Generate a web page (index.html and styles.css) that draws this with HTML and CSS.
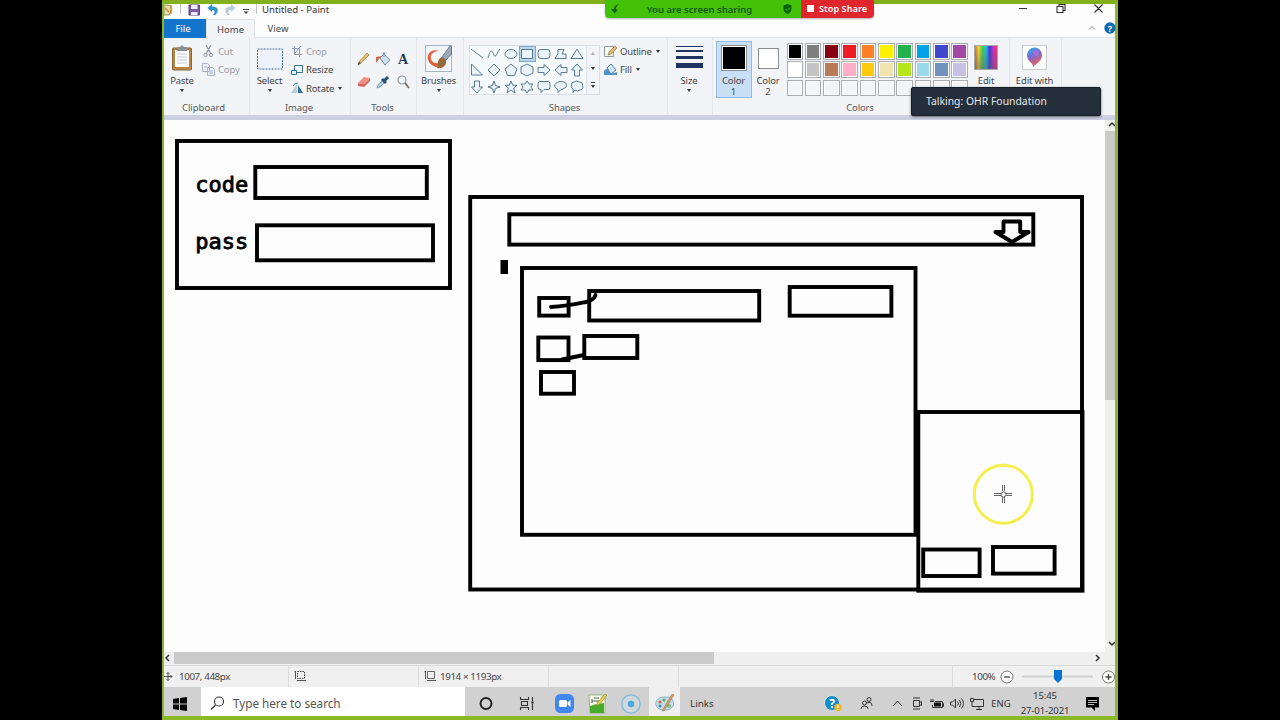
FILE: index.html
```
<!DOCTYPE html>
<html lang="en">
<head>
  <meta charset="UTF-8">
  <meta name="viewport" content="width=device-width, initial-scale=1.0">
  <title>Untitled - Paint</title>
  <link rel="stylesheet" href="styles.css">
</head>
<body>
  <div class="screen">
    <header class="titlebar">
      <svg class="quick" width="94" height="15" viewBox="0 0 94 15">
        <path d="M0 1h5l3 4-3 6H0z" fill="#e3dcae" stroke="#8b9a61"/>
        <path d="M1 4l4 4M7 1v9" stroke="#d58a3a" stroke-width="1.5"/>
        <path d="M16.500 0v10M92.500 0v10" stroke="#c4c4c4"/>
        <path d="M25 1h10.500v10H25z" fill="#7d5ba6" stroke="#60458a"/>
        <path d="M27 1h6.500v4H27zM27 8h6.500v3H27z" fill="#f2eef8"/>
        <path d="M43.500 4L48 0v2.500c6 0 7.500 4 3.500 8.500h-2.500c2.500-3 2-5-1-5V8z" fill="#2f93cf"/>
        <path d="M71.500 4L67 0v2.500c-6 0-7.500 4-3.500 8.500H66c-2.500-3-2-5 1-5V8z" fill="#bccbd6"/>
        <path d="M79 5.500h6" stroke="#444"/><path d="M79.500 7.500h5L82 10z" fill="#444"/>
      </svg>
      <span class="title">Untitled - Paint</span>
      <svg class="window-buttons" width="100" height="15" viewBox="0 0 100 15">
        <path d="M4 4.500h8M42 2.500h6v6h-6zM44 2.500v-2h6v6h-2M79.500 0.500l8 8M87.500 0.500l-8 8" fill="none" stroke="#333" stroke-width="1.100"/>
      </svg>
    </header>

    <nav class="tabs">
      <span class="tab file">File</span>
      <span class="tab active">Home</span>
      <span class="tab">View</span>
      <svg class="help" width="29" height="14" viewBox="0 0 29 14">
        <path d="M2 8.500l3-3 3 3" fill="none" stroke="#888"/>
        <circle cx="23" cy="7" r="5.700" fill="#1269b4"/>
        <text x="23" y="10.500" class="mark">?</text>
      </svg>
    </nav>

    <section class="ribbon">
      <div class="group clipboard">
        <div class="tools-row">
          <div class="big">
            <svg width="22" height="26" viewBox="0 0 22 26">
              <rect x="1.500" y="3" width="19" height="22" rx="1" fill="#b98745" stroke="#8c6736"/>
              <path d="M4 5h14v17H4z" fill="#fff"/>
              <path d="M6 9h10M6 12h10M6 15h10M6 18h10" stroke="#c2ccd8"/>
              <path d="M6 2h3l2-2 2 2h3v4H6z" fill="#8b8f96"/>
            </svg>
            <span>Paste</span><i class="caret"></i>
          </div>
          <div class="list">
            <div class="item off"><svg width="13" height="13" viewBox="0 0 13 13"><path d="M4 0l5 9M9 0L4 9" stroke="#8f98a8" stroke-width="1.300"/><circle cx="3.500" cy="10" r="1.700" fill="none" stroke="#8f98a8"/><circle cx="9" cy="10" r="1.700" fill="none" stroke="#8f98a8"/></svg>Cut</div>
            <div class="item off"><svg width="13" height="13" viewBox="0 0 13 13"><path d="M.5.5h5l2 2v6h-7zM5.500 4.500h5l2 2v6h-7z" fill="#edf1f8" stroke="#a9b4c8"/><path d="M7 8h4M7 10h4M2 4h3" stroke="#a9b4c8"/></svg>Copy</div>
          </div>
        </div>
        <div class="caption">Clipboard</div>
      </div>

      <div class="group image">
        <div class="tools-row">
          <div class="big">
            <svg width="26" height="26" viewBox="0 0 26 26"><rect x=".5" y="4" width="25" height="20" fill="#edf2fa" stroke="#4d7396" stroke-dasharray="2 1"/></svg>
            <span>Select</span><i class="caret"></i>
          </div>
          <div class="list">
            <div class="item off"><svg width="12" height="12" viewBox="0 0 12 12"><path d="M3.500 1v8.500H11M1 3.500h7.500V12M3 9l7-8" fill="none" stroke="#8f9cb0"/></svg>Crop</div>
            <div class="item"><svg width="12" height="12" viewBox="0 0 12 12"><path d="M3.500 1.500h8v7h-8z" fill="#eef6fa" stroke="#3e6f8e"/><path d="M.5 6.500h5v4h-5z" fill="#e3f3fb" stroke="#2c7697"/></svg>Resize</div>
            <div class="item"><svg width="12" height="12" viewBox="0 0 12 12"><path d="M6 2v9H0z" fill="#b9ccdc"/><path d="M7 3l5 8H7z" fill="#2d6c9b"/><path d="M2 4q1-3 5-3" fill="none" stroke="#3d87b5"/></svg>Rotate<i class="caret"></i></div>
          </div>
        </div>
        <div class="caption">Image</div>
      </div>

      <div class="group tools">
        <div class="tool-grid">
          <svg viewBox="0 0 14 14"><path d="M1 13l1-3 8-9 2 2-8 8z" fill="#e9c65d" stroke="#8d743e" stroke-width=".7"/><path d="M1 13l1-3 2 1z" fill="#444"/></svg>
          <svg viewBox="0 0 14 14"><path d="M4 6l4-4 6 6-5 5z" fill="#cfe0ee" stroke="#6e91ad"/><path d="M0 11V5l6-1-3 3z" fill="#c9674d"/><path d="M8 5V0" stroke="#6e91ad"/></svg>
          <svg viewBox="0 0 14 14"><text x="7" y="12" class="letter">A</text></svg>
          <svg viewBox="0 0 14 14"><path d="M1 8l6-6 6 1-6 6z" fill="#f08f86"/><path d="M1 8l6 1v3l-6-1zM7 9l6-6v3l-6 6z" fill="#d66561"/></svg>
          <svg viewBox="0 0 14 14"><path d="M1 13l1-3 5-5 2 2-5 5z" fill="#a8cce2" stroke="#668ba7" stroke-width=".7"/><path d="M6 4l4 4M8 6l4-4" stroke="#245378" stroke-width="3"/></svg>
          <svg viewBox="0 0 14 14"><circle cx="6" cy="5" r="4" fill="#eef5fb" stroke="#8b929a" stroke-width="1.200"/><path d="M9 8l4 5" stroke="#75716c" stroke-width="2"/></svg>
        </div>
        <div class="caption">Tools</div>
      </div>

      <div class="group brushes">
        <div class="big">
          <svg width="27" height="27" viewBox="0 0 27 27">
            <rect x=".5" y=".5" width="26" height="26" fill="#f3f6fa" stroke="#a4b6c8"/>
            <path d="M14 6C6 3 0 10 4 17c3 5 9 6 14 4l-3-3c-4 1-8 0-9-4-1-5 3-8 8-8z" fill="#e2633a"/>
            <path d="M17 12l8-11 1.500 1v7L21 15z" fill="#9babbc" stroke="#586f89" stroke-width=".8"/>
            <path d="M12 23c2-3-1-8 5-11l4 3c1 6-4 9-9 8z" fill="#96683a"/>
          </svg>
          <span>Brushes</span><i class="caret"></i>
        </div>
      </div>

      <div class="group shapes">
        <div class="tools-row">
          <div class="gallery">
            <div class="shape-grid" id="shapes"></div>
            <div class="gallery-scroll"><i class="caret up"></i><i class="caret"></i><span class="more"><i class="caret"></i></span></div>
          </div>
          <div class="list">
            <div class="item"><svg width="13" height="13" viewBox="0 0 13 13"><path d="M.5 1.500h9v10h-9z" fill="#f7f9ec" stroke="#8b98a2"/><path d="M4 10l1-3 6-6 2 2-6 6z" fill="#e5b969" stroke="#8e774a" stroke-width=".7"/></svg>Outline<i class="caret"></i></div>
            <div class="item"><svg width="13" height="13" viewBox="0 0 13 13"><path d="M3 5l4-4 5 6-5 4z" fill="#d5e8f5" stroke="#557fa2"/><path d="M0 8q3-4 5 0t8 1v3H0z" fill="#4f91c8"/></svg>Fill<i class="caret"></i></div>
          </div>
        </div>
        <div class="caption">Shapes</div>
      </div>

      <div class="group size">
        <div class="big">
          <svg width="27" height="27" viewBox="0 0 27 27"><path d="M0 1h27v1H0zM0 5h27v2H0zM0 11h27v3H0zM0 18h27v5H0z" fill="#1c345f"/></svg>
          <span>Size</span><i class="caret"></i>
        </div>
      </div>

      <div class="group colors">
        <div class="tools-row">
          <div class="big color-pick selected"><b class="chip black"></b><span>Color<br>1</span></div>
          <div class="big color-pick"><b class="chip white"></b><span>Color<br>2</span></div>
          <div class="palette" id="palette"></div>
          <div class="big edit"><b class="rainbow"></b><span>Edit</span></div>
        </div>
        <div class="caption">Colors</div>
      </div>

      <div class="group paint3d">
        <div class="big">
          <svg width="25" height="25" viewBox="0 0 25 25">
            <defs><linearGradient id="drop" x1="0" y1="0" x2=".4" y2="1"><stop offset="0" stop-color="#26b7ed"/><stop offset=".5" stop-color="#7867d2"/><stop offset="1" stop-color="#f4654f"/></linearGradient></defs>
            <rect x=".5" y=".5" width="24" height="24" fill="#fff" stroke="#ccc"/>
            <path d="M11 22c1-4-6-5-6-12a7 7 0 0 1 15 0c0 6-5 8-9 12z" fill="url(#drop)"/>
            <circle cx="14" cy="8" r="3" fill="#a070d8"/>
          </svg>
          <span>Edit with</span>
        </div>
      </div>
    </section>

    <main class="workspace">
      <svg class="canvas" viewBox="164 120 941 532">
        <g class="ink">
          <rect x="177" y="141" width="273" height="147"/>
          <rect x="255.300" y="167" width="171.500" height="31"/>
          <rect x="257" y="225.300" width="176" height="35"/>
          <rect x="470.200" y="197" width="611.800" height="392.500"/>
          <rect x="509.300" y="214.300" width="524" height="30.300"/>
          <path class="scribble" d="M1003.500 232V221.500h16.700V232h8.500L1012 242 995.500 232z"/>
          <rect x="522" y="268" width="393.500" height="266.800"/>
          <rect x="539.200" y="298" width="29.400" height="17.600"/>
          <rect x="589.200" y="291" width="170" height="29.500"/>
          <rect x="789.700" y="287" width="101.700" height="28.700"/>
          <rect x="538.300" y="337.500" width="30.200" height="22.600"/>
          <rect x="584.300" y="336" width="53" height="22"/>
          <rect x="541" y="372" width="33" height="21.700"/>
          <path class="scribble" d="M551 307c16-1 25-3 35-5 5-1 9-4 9.500-7M562 359.500l22-4.500"/>
          <rect x="918.300" y="412" width="164.200" height="178.700"/>
          <rect x="923.200" y="549.500" width="56.400" height="26.500"/>
          <rect x="993" y="547" width="61.600" height="26.600"/>
        </g>
        <rect x="500.500" y="260" width="7.500" height="14"/>
        <text x="195.300" y="191.500" class="typed">code</text>
        <text x="195.300" y="248.500" class="typed">pass</text>
        <circle cx="1003.300" cy="494.300" r="29" class="halo"/>
        <path class="cross" d="M994 493.500h7M994 495.500h7M1006 493.500h6M1006 495.500h6M1002.500 485v6M1004.500 485v6M1002.500 497v6M1004.500 497v6"/>
        <circle cx="1003.500" cy="494.500" r="2.500" class="cross"/>
      </svg>
      <div class="vscroll">
        <svg width="10" height="11" viewBox="0 0 10 11"><path d="M4 6l3-3 3 3" class="chev"/></svg>
        <div class="thumb"></div>
        <svg class="end" width="10" height="12" viewBox="0 0 10 12"><path d="M4 2l3 3 3-3" class="chev"/></svg>
      </div>
    </main>
    <div class="hscroll">
      <svg width="10" height="13" viewBox="0 0 10 13"><path d="M5 3L2 6l3 3" class="chev"/></svg>
      <div class="thumb"></div>
      <svg class="end" width="24" height="13" viewBox="0 0 24 13"><path d="M5 3l3 3-3 3" class="chev"/></svg>
    </div>

    <footer class="statusbar">
      <div class="cell"><svg width="9" height="11" viewBox="0 0 9 11"><path d="M0 5.500h8M4 1.500v8M2.500 3L4 1.500 5.500 3M2.500 8L4 9.500 5.500 8M6.500 4L8 5.500 6.500 7" fill="none" stroke="#444" stroke-width=".9"/></svg><span class="pos">1007, 448px</span></div>
      <div class="cell"><svg width="12" height="11" viewBox="0 0 12 11"><path d="M3.500.5h7v7h-7z" fill="none" stroke="#444" stroke-dasharray="1.500 1"/><path d="M1.500 0v8M3 9.500h9M0 1.500L1.500 0" fill="none" stroke="#444" stroke-width=".9"/></svg></div>
      <div class="cell"><svg width="12" height="11" viewBox="0 0 12 11"><path d="M3.500.5h7v7h-7z" fill="none" stroke="#666"/><path d="M1.500 0v8M3 9.500h9M0 1.500L1.500 0" fill="none" stroke="#444" stroke-width=".9"/></svg><span>1914 × 1193px</span></div>
      <div class="cell"></div>
      <div class="cell wide"></div>
      <div class="zoom">
        <span>100%</span>
        <svg width="120" height="18" viewBox="0 0 120 18">
          <circle cx="12" cy="9" r="6" fill="#fff" stroke="#777"/><path d="M9 9h6" stroke="#444" stroke-width="1.300"/>
          <path d="M27 8.500h71" stroke="#d0d0d0" stroke-width="2"/><path d="M59 2h8v9l-4 4-4-4z" fill="#0873d2"/>
          <circle cx="113.500" cy="9" r="6" fill="#fff" stroke="#777"/><path d="M110.500 9h6M113.500 6v6" stroke="#444" stroke-width="1.300"/>
        </svg>
      </div>
    </footer>

    <div class="taskbar">
      <div class="start"><svg width="14" height="14" viewBox="0 0 14 14"><path d="M0 2l6-1v5.600H0zM7 .9L14 0v6.600H7zM0 7.500h6v5.600l-6-1zM7 7.500h7V14l-7-.9z"/></svg></div>
      <div class="search"><svg width="15" height="15" viewBox="0 0 15 15"><circle cx="9" cy="5.500" r="4.500" fill="none" stroke="#333" stroke-width="1.100"/><path d="M5.500 9L1 13.500" stroke="#333" stroke-width="1.200"/></svg>Type here to search</div>
      <div class="slot w41"><svg width="14" height="14" viewBox="0 0 14 14"><circle cx="7" cy="6.500" r="5.500" fill="none" stroke="#222" stroke-width="1.900"/></svg></div>
      <div class="slot w40"><svg width="15" height="13" viewBox="0 0 15 13"><path d="M1 2.500h9M1 10.500h9M2.500 4.500h6v4h-6zM1.500 0v2M9.500 0v2M1.500 11v2M9.500 11v2M13.500 0v4M13.500 7v6" fill="none" stroke="#333" stroke-width="1.100"/><path d="M12.500 4.500h2v2h-2z"/></svg></div>
      <div class="slot w36"><svg width="19" height="19" viewBox="0 0 19 19"><rect width="19" height="19" rx="5.500" fill="#4087ef"/><rect x="4" y="6" width="8" height="7" rx="1.500" fill="#fff"/><path d="M12.500 8.500L15.500 6v7l-3-2.500z" fill="#fff"/></svg></div>
      <div class="slot w31"><svg width="19" height="20" viewBox="0 0 19 20"><path d="M1 1h14l2 3v15H2z" fill="#f7f9ed" stroke="#85ac67" stroke-width=".8"/><path d="M2 12q6-2 14-3v10H2z" fill="#47ac29"/><path d="M4 5v4M4 7h7M6 4h5" stroke="#59634e"/><path d="M8 12l2-4 7-8 2 1-7 9z" fill="#e3d84a" stroke="#827b28" stroke-width=".6"/></svg></div>
      <div class="slot w36"><svg width="20" height="20" viewBox="0 0 20 20"><circle cx="10" cy="10" r="9.200" fill="#d0d8dd" stroke="#7dbbd9" stroke-width="1.300"/><circle cx="10" cy="10" r="3.300" fill="#4ba9dc"/></svg></div>
      <div class="slot w31 current"><svg width="20" height="19" viewBox="0 0 20 19"><path d="M9 3c-6 0-9 4-8 8s6 6 11 5 8-5 6-9-5-4-9-4z" fill="#c1dcea" stroke="#82a6b8" stroke-width=".8"/><circle cx="5" cy="8" r="1.500" fill="#d3604d"/><circle cx="9" cy="6" r="1.500" fill="#65a64e"/><circle cx="5" cy="12" r="1.500" fill="#5079c3"/><circle cx="14" cy="12" r="2" fill="#7fbd7b"/><path d="M7 17L17 0l2 1L9 17z" fill="#d89a5d" stroke="#9c7048" stroke-width=".5"/></svg></div>
      <span class="links">Links</span>

      <div class="tray">
        <div class="slot w34"><svg width="18" height="17" viewBox="0 0 18 17"><circle cx="8" cy="8" r="7.500" fill="#168ac4" stroke="#cbe5ef"/><text x="8" y="12.500" class="mark large">?</text><circle cx="14" cy="12.500" r="3.700" fill="#eeb52d"/><path d="M14 10v3M14 14v1" stroke="#fff"/></svg></div>
        <div class="slot w33"><svg width="13" height="13" viewBox="0 0 13 13"><circle cx="4.500" cy="6" r="2" class="line"/><circle cx="9" cy="2.500" r="2" class="line"/><path d="M1 12q0-3 3.500-3t3.500 3M7 6q5-2 5 3" class="line"/></svg></div>
        <div class="slot w20 gap"><svg width="11" height="7" viewBox="0 0 11 7"><path d="M1 6l4.500-5L10 6" class="line"/></svg></div>
        <div class="slot w20"><svg width="12" height="13" viewBox="0 0 12 13"><path d="M2.500 3.500h6v6h-6zM8.500 5.500l2-1v4l-2-1M2 1h7M2 12h7" class="line"/></svg></div>
        <div class="slot w20"><svg width="14" height="10" viewBox="0 0 14 10"><path d="M4 3.500h7v4H4z" fill="#111"/><path d="M2.500 6v2.500h10v-6H5M12.500 4.500h1v3h-1M0 2.500h4M1 0v2M3 0v2" class="line"/></svg></div>
        <div class="slot w20"><svg width="15" height="11" viewBox="0 0 15 11"><path d="M.5 4h2l3-3v9l-3-3h-2zM7.500 3.500q1.500 2 0 4M9.500 2q2.500 3.500 0 7M11.500.5q4 5 0 10" class="line"/></svg></div>
        <div class="slot w20"><svg width="14" height="12" viewBox="0 0 14 12"><path d="M4 1.500h9.500v7H4M6 11.500h6M9 8.500v3M.5.500h3v3h-3zM2 4v4.500h2" class="line"/></svg></div>
        <span class="lang">ENG</span>
        <div class="clock">15:45<br>27-01-2021</div>
        <div class="slot w34"><svg width="13" height="14" viewBox="0 0 13 14"><path d="M0 0h13v10.500H9V14l-3.500-3.500H0z"/><path d="M2 3.500h9M2 5.500h9M2 7.500h6" stroke="#d1d1d1" stroke-width=".9"/></svg></div>
      </div>
    </div>

    <div class="sharebar">
      <div class="sharing">
        <svg width="9" height="10" viewBox="0 0 9 10"><path d="M8 0C4 1 3 3 3 5H0l3.500 4.500L7 5.500H5C5 3 6 1.500 8 0z" fill="#07660b"/></svg>
        <span>You are screen sharing</span>
        <svg width="9" height="10" viewBox="0 0 9 10"><path d="M4.500 0l4 1.500V5c0 2.500-2 4-4 5-2-1-4-2.500-4-5V1.500z" fill="#08620b"/><path d="M2.500 5l1.500 1.500L7 3.500" fill="none" stroke="#43c008"/></svg>
      </div>
      <div class="stop"><i></i>Stop Share</div>
    </div>
    <div class="talking">Talking: OHR Foundation</div>
  </div>

  <script>
    const shapes = [
      'M1 2l12 9',
      'M1 11C4 0 5 4 7 8s3-3 6-6',
      'M1 7a6 4.500 0 1 0 12 0a6 4.500 0 1 0-12 0z',
      'M1.500 2.500h11v9h-11z',
      'M4 2.500h6q3 0 3 3v3q0 3-3 3H4q-3 0-3-3v-3q0-3 3-3z',
      'M1 11.500l3-5V2.500h6L8 7h4v4.500z',
      'M7 2l6 9.500H1z',
      'M1.500 1l11 11h-11z',
      'M7 1l6 6-6 6-6-6z',
      'M7 1l6 5-2.500 6.500h-7L1 6z',
      'M7 1l6 3v6l-6 3-6-3V4z',
      'M1 4.500h6V1.500l6 5.500-6 5.500v-3H1z',
      'M13 4.500H7V1.500L1 7l6 5.500v-3h6z',
      'M4.500 13V7H1.500L7 1l5.500 6h-3v6z',
      'M4.500 1v6H1.500L7 13l5.500-6h-3V1z',
      'M7 1l1.500 4.500L13 7 8.500 8.500 7 13 5.500 8.500 1 7l4.500-1.500z',
      'M7 1l1.700 4.200H13L9.700 8l1.300 5-4-3-4 3 1.300-5L1 5.200h4.300z',
      'M7 1l2 3h4l-2 3 2 3H9l-2 3-2-3H1l2-3-2-3h4z',
      'M3 1.500h8q2 0 2 2v4q0 2-2 2H7l-3 3v-3H3q-2 0-2-2v-4q0-2 2-2z',
      'M4 9.500C-2 7 1 1.500 7 1.500s8 5 2 7.500L7 9.500l-3 3z',
      'M4 2q3-2 5 0 4 0 3.500 3.500Q14 9 10 10q-3 2-5 0l-2 2.500V9Q0 7 1.500 5 1 2 4 2z'
    ];
    const colors = [
      '#000000', '#7f7f7f', '#880015', '#ed1c24', '#ff7f27', '#fff200', '#22b14c', '#00a2e8', '#3f48cc', '#a349a4',
      '#ffffff', '#c3c3c3', '#b97a57', '#ffaec9', '#ffc90e', '#efe4b0', '#b5e61d', '#99d9ea', '#7092be', '#c8bfe7'
    ];

    document.getElementById('shapes').innerHTML = shapes.map((d, i) =>
      `<span class="shape${i === 3 ? ' picked' : ''}"><svg viewBox="0 0 14 14"><path d="${d}"/></svg></span>`
    ).join('');

    const palette = document.getElementById('palette');
    for (let i = 0; i < 30; i++) {
      const cell = document.createElement('span');
      cell.className = 'swatch';
      if (colors[i]) cell.style.backgroundColor = colors[i];
      palette.appendChild(cell);
    }
  </script>
</body>
</html>
```
FILE: styles.css
```
:root {
  --green: #8ab829;
  --ribbon: #f3f4f7;
  --text: #454545;
}
* {
  box-sizing: border-box;
}
body {
  margin: 0;
  background: #000;
  color: var(--text);
  font-family: "Noto Sans", "Open Sans", sans-serif;
  font-size: 9.5px;
  overflow: hidden;
}
svg {
  display: block;
  flex: none;
}
.screen {
  position: relative;
  width: 956px;
  height: 720px;
  margin-left: 162px;
  border: 2px solid var(--green);
  border-top: 4px solid #82b01c;
  border-right-width: 3px;
  border-bottom-width: 4px;
  background: #fdfdfd;
  display: flex;
  flex-direction: column;
}

/* title and tabs */
.titlebar {
  height: 15px;
  display: flex;
}
.title {
  padding-left: 4px;
  line-height: 12px;
  font-size: 9.6px;
  color: #333;
}
.window-buttons {
  margin-left: auto;
}
.tabs {
  height: 19px;
  display: flex;
  line-height: 20px;
  border-bottom: 1px solid #e4e5e8;
}
.tab {
  width: 46px;
  height: 19px;
  text-align: center;
}
.tab.file {
  width: 42px;
  padding-right: 4px;
  background: #1374cb;
  color: #fff;
}
.tab.active {
  width: 49px;
  background: var(--ribbon);
  border: 1px solid #dfe1e6;
  border-bottom: 0;
  line-height: 19px;
}
.help {
  margin: 2px -1px 0 auto;
}
.mark {
  font-size: 9px;
  font-weight: bold;
  text-anchor: middle;
  fill: #fff;
}
.mark.large {
  font-size: 12px;
}

/* ribbon */
.ribbon {
  height: 82px;
  display: flex;
  background: var(--ribbon);
  border-bottom: 5px solid #cdd0e0;
  letter-spacing: -.15px;
}
.group {
  border-right: 1px solid #e5e7ec;
  height: 77px;
  padding-top: 4px;
  display: flex;
  flex-direction: column;
  flex: none;
}
.clipboard { width: 86px; }
.image { width: 101px; }
.tools { width: 66px; }
.brushes { width: 47px; }
.shapes { width: 204px; }
.size { width: 45px; }
.colors { width: 297px; }
.paint3d { width: 52px; }
.caption {
  margin-top: auto;
  line-height: 14px;
  padding-right: 2px;
  text-align: center;
  color: #5a5a5a;
}
.clipboard .caption {
  padding-right: 6px;
  letter-spacing: 0;
}
.tools-row {
  display: flex;
  height: 58px;
}
.big {
  width: 36px;
  padding-top: 3px;
  height: 55px;
  display: flex;
  flex-direction: column;
  align-items: center;
  text-align: center;
  line-height: 11px;
}
.big > svg,
.big > b {
  margin-bottom: 3px;
}
.big > span {
  white-space: nowrap;
  margin-top: auto;
  height: 22px;
}
.big > .caret {
  margin: -8px 0 5px;
}
.caret {
  width: 0;
  height: 0;
  flex: none;
  border: 2.5px solid transparent;
  border-top: 3px solid #333;
  border-bottom: 0;
}
.list {
  display: flex;
  flex-direction: column;
}
.item {
  height: 18.500px;
  display: flex;
  align-items: center;
  gap: 3px;
}
.item .caret {
  margin-left: 1px;
}
.off {
  color: #999ca3;
}
.clipboard .list { padding-left: 2px; }
.image .big { width: 39px; }
.image .list { padding-left: 2px; }
.tool-grid {
  display: grid;
  grid-template-columns: repeat(3, 14px);
  gap: 9px 5.500px;
  padding: 10px 0 0 5.500px;
}
.letter {
  font: bold 14px "Liberation Serif", serif;
  text-anchor: middle;
  fill: #253957;
}
.brushes .big { width: 43px; }
.gallery {
  width: 131px;
  height: 50px;
  margin: 3px 4px 0 5px;
  display: flex;
  border: 1px solid #d8dfe7;
  background: #f5fafd;
}
.shape-grid {
  display: grid;
  grid-template-columns: repeat(7, 16.700px);
  grid-template-rows: repeat(3, 16.300px);
  margin-left: -1px;
}
.shape {
  display: flex;
  align-items: center;
  justify-content: center;
}
.shape svg {
  width: 14px;
  height: 14px;
}
.shape path {
  fill: #eaf4fa;
  stroke: #4c6c86;
  stroke-width: .9;
}
.shape:first-child path,
.shape:nth-child(2) path {
  fill: none;
}
.shape.picked {
  background: #b9d5ee;
  outline: 1px solid #7da7cb;
  outline-offset: -1px;
}
.gallery-scroll {
  flex: 1;
  border-left: 1px solid #dbe2e8;
  background: var(--ribbon);
  display: flex;
  flex-direction: column;
  align-items: center;
  justify-content: space-around;
}
.caret.up {
  border-top: 0;
  border-bottom: 3px solid #aaa;
}
.more {
  border-top: 1px solid #444;
  padding-top: 2px;
}
.more .caret {
  display: block;
}
.size .big { width: 42px; }
.color-pick {
  width: 34px;
  margin-left: 4px;
}
.color-pick + .color-pick { margin-left: 0; }
.color-pick.selected {
  padding-right: 1px;
}
.selected {
  background: #c8dff5;
  outline: 1px solid #91bbdf;
}
.chip {
  border: 1px solid #8a8f96;
  box-shadow: inset 0 0 0 1px #fff;
}
.chip.black {
  width: 26px;
  height: 26px;
  background: #000;
}
.chip.white {
  width: 21px;
  height: 21px;
  margin-top: 3px;
  background: #fff;
}
.palette {
  display: grid;
  grid-template-columns: repeat(10, 16.500px);
  grid-template-rows: repeat(3, 16.500px);
  gap: 1.830px;
  margin: 1px 0 0 1.500px;
}
.swatch {
  border: 1px solid #aaadb2;
  box-shadow: inset 0 0 0 1px #fbfbfb;
}
.edit {
  width: 36px;
}
.rainbow {
  width: 24px;
  height: 25px;
  border: 1px solid #aaa;
  background: linear-gradient(transparent, rgba(90, 90, 100, .5)),
    linear-gradient(90deg, #f05c32, #e7e536, #45cf4b, #26bfe1, #3939dc, #d42bc9, #ee346e);
}
.paint3d .big { width: 49px; }

/* drawing area */
.workspace {
  height: 532px;
  display: flex;
}
.canvas {
  width: 941px;
  height: 532px;
}
.ink {
  fill: none;
  stroke: #000;
  stroke-width: 3.900;
}
.scribble {
  stroke-linecap: round;
  stroke-linejoin: round;
}
.typed {
  font-family: "DejaVu Sans Mono", monospace;
  font-size: 22px;
  stroke: #000;
  stroke-width: .8;
}
.halo {
  fill: none;
  stroke: #f3ef4e;
  stroke-width: 3;
}
.cross {
  fill: none;
  stroke: #555;
  stroke-width: .9;
}
.vscroll {
  width: 10px;
  background: #efefef;
  display: flex;
  flex-direction: column;
}
.vscroll .thumb {
  height: 269px;
  background: #cacaca;
}
.end {
  margin-top: auto;
}
.chev {
  fill: none;
  stroke: #333;
  stroke-width: 1.500;
}
.hscroll {
  height: 13px;
  display: flex;
  background: #efefef;
}
.hscroll .thumb {
  width: 540px;
  height: 12px;
  background: #cacaca;
}
.hscroll .end {
  margin: 0 0 0 auto;
}

/* status bar */
.statusbar {
  height: 22px;
  display: flex;
  background: #f0f0f0;
  border-top: 1px solid #dadada;
  font-size: 9.8px;
  letter-spacing: -.4px;
}
.cell {
  width: 130px;
  border-right: 1px solid #dcdcdc;
  display: flex;
  align-items: center;
  gap: 4px;
  padding: 0 0 1px 5px;
}
.cell:first-child {
  width: 125px;
  padding-left: 0;
  gap: 6px;
}
.cell.wide {
  width: 274px;
}
.zoom {
  display: flex;
  align-items: center;
  padding-left: 19px;
  overflow: hidden;
}
.zoom span {
  width: 23px;
}

/* taskbar */
.taskbar {
  height: 29px;
  display: flex;
  align-items: stretch;
  background: #d1d1d1;
  color: #333;
}
.start {
  width: 37px;
  padding: 10px 0 0 9px;
}
.search {
  width: 264px;
  display: flex;
  align-items: center;
  gap: 8px;
  padding: 3px 0 0 9px;
  background: #fff;
  font-size: 11.700px;
  color: #555;
}
.slot {
  display: flex;
  align-items: center;
  justify-content: center;
  padding-top: 4px;
}
.w20 { width: 20px; }
.w31 { width: 31px; }
.w33 { width: 33px; }
.w34 { width: 34px; }
.w36 { width: 36px; }
.w40 { width: 40px; }
.w41 { width: 41px; }
.gap { margin-left: 4px; }
.current {
  background: #efefef;
}
.links {
  padding-left: 10px;
  line-height: 33px;
  font-size: 9.8px;
}
.tray {
  margin-left: auto;
  padding-right: 6px;
  display: flex;
}
.line {
  fill: none;
  stroke: #333;
}
.lang {
  width: 28px;
  text-align: center;
  line-height: 33px;
}
.clock {
  width: 60px;
  padding-top: 1px;
  text-align: center;
  line-height: 15px;
  letter-spacing: -.1px;
}

/* meeting overlays */
.sharebar {
  position: absolute;
  top: -4px;
  left: 441px;
  width: 269px;
  height: 18px;
  display: flex;
  font-weight: 600;
  border-radius: 0 0 4px 4px;
  overflow: hidden;
  box-shadow: 0 1px 2px rgba(0, 0, 0, .3);
}
.sharing {
  width: 196px;
  display: flex;
  align-items: center;
  justify-content: space-between;
  padding: 0 9px 0 6px;
  background: #43c008;
  color: #145a0c;
  font-size: 9.5px;
}
.sharing span {
  padding-right: 4px;
}
.stop {
  flex: 1;
  display: flex;
  align-items: center;
  gap: 5px;
  padding: 0 0 1px 6px;
  background: #e0262d;
  color: #fff;
  font-size: 9.2px;
}
.stop i {
  width: 7px;
  height: 7px;
  background: #fff;
}
.talking {
  position: absolute;
  top: 83px;
  left: 747px;
  width: 190px;
  height: 29px;
  padding-left: 14px;
  line-height: 27px;
  background: #252f3b;
  border: 1px solid #151c24;
  border-radius: 2px;
  box-shadow: 0 1px 3px rgba(0, 0, 0, .5);
  color: #e6e8ea;
  font-size: 10.400px;
}
```
